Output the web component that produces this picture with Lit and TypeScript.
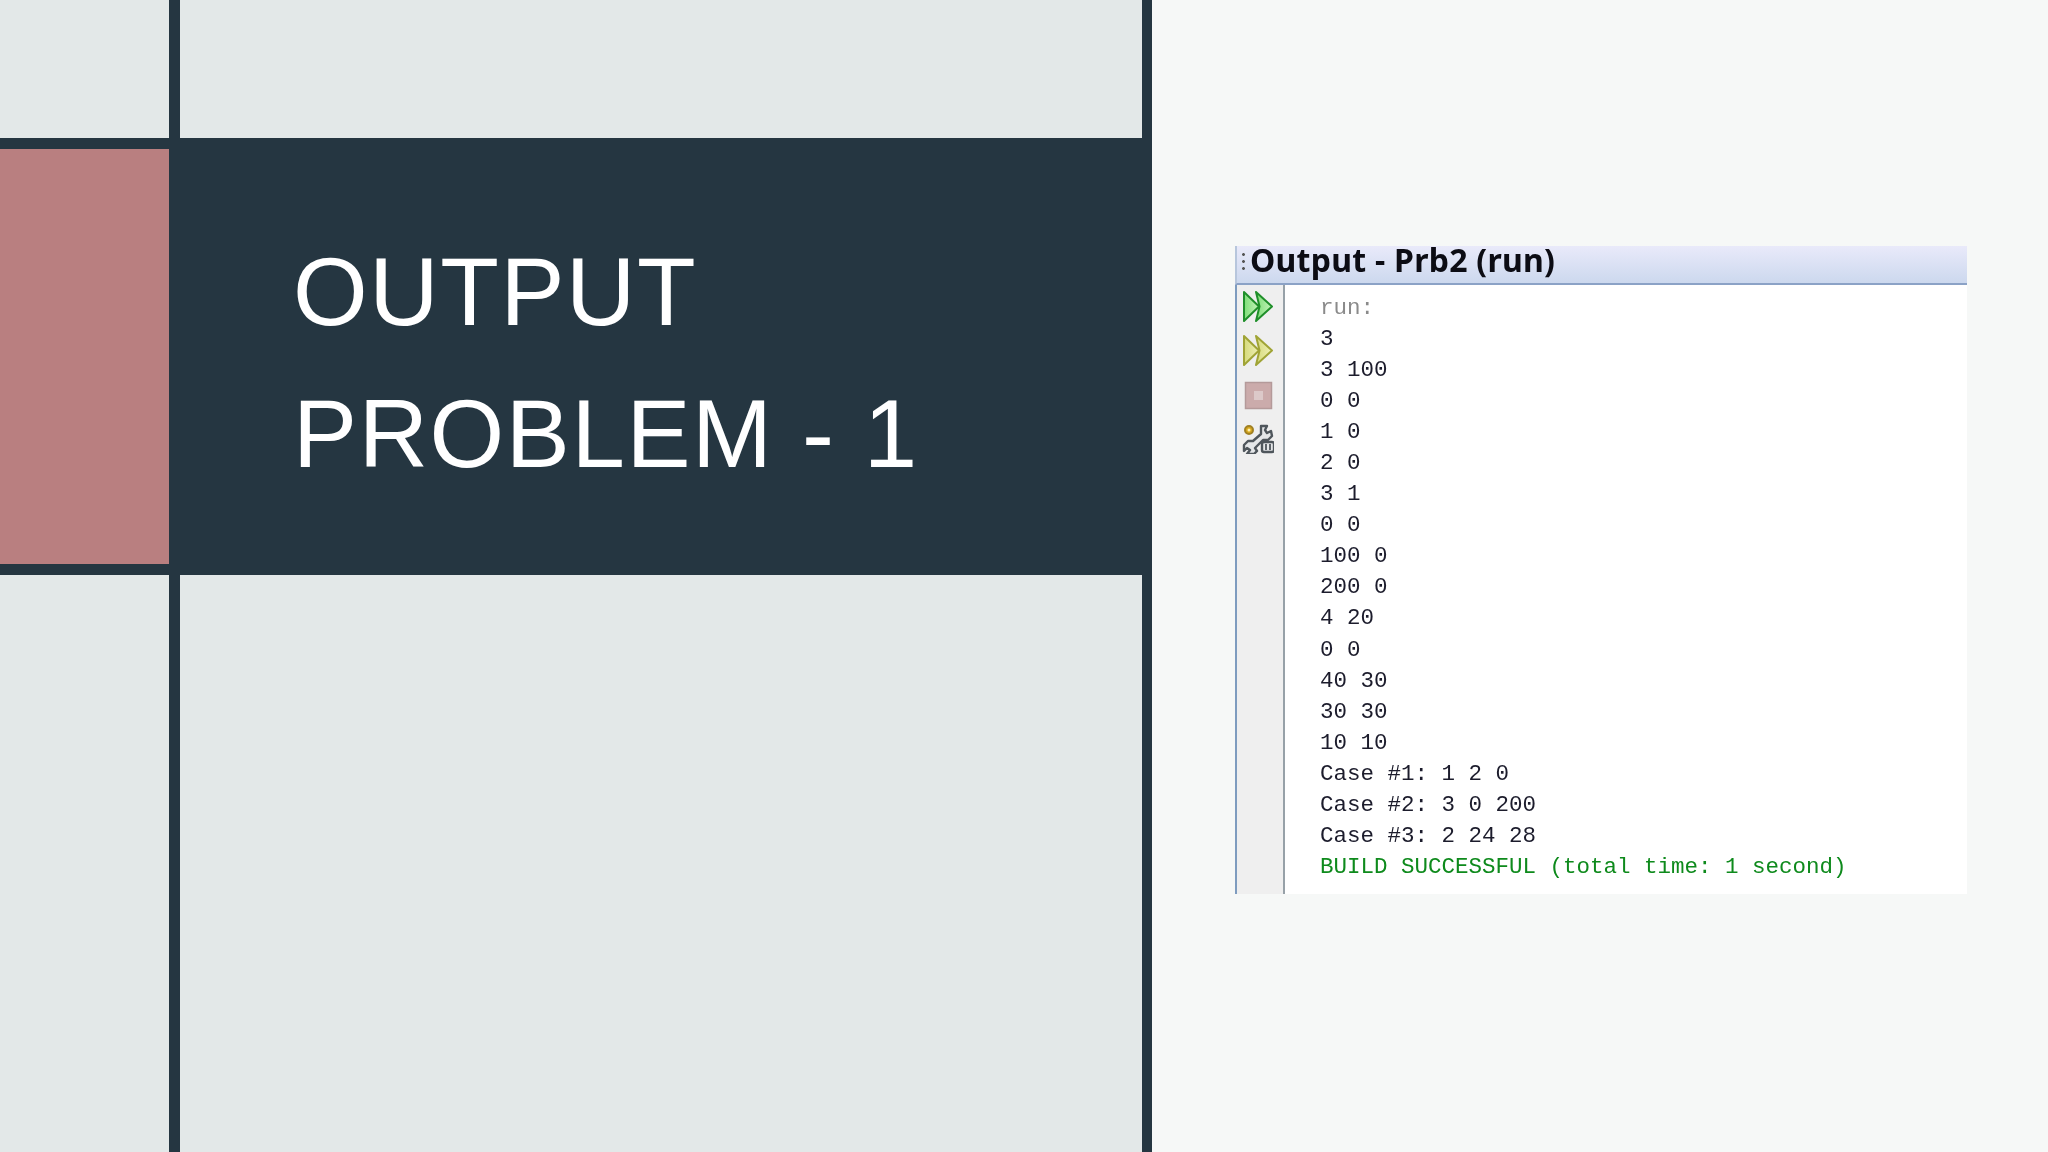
import { LitElement, html, css } from 'lit';
import { customElement } from 'lit/decorators.js';

const LINES = [
  '3',
  '3 100',
  '0 0',
  '1 0',
  '2 0',
  '3 1',
  '0 0',
  '100 0',
  '200 0',
  '4 20',
  '0 0',
  '40 30',
  '30 30',
  '10 10',
  'Case #1: 1 2 0',
  'Case #2: 3 0 200',
  'Case #3: 2 24 28',
];

const runIcon = (id: string, from: string, to: string, edge: string) => html`
  <svg class="icon" viewBox="0 0 32 32">
    <defs>
      <linearGradient id=${id} x1="0" y1="0" x2="1" y2="0">
        <stop offset="0" stop-color=${from}></stop>
        <stop offset="1" stop-color=${to}></stop>
      </linearGradient>
    </defs>
    <path d="M2 2 L17 16.500 L2 31 Z" fill="url(#${id})" stroke=${edge} stroke-width="2" stroke-linejoin="round"></path>
    <path d="M14 2 L30 16.500 L14 31 L17.500 16.500 Z" fill="url(#${id})" stroke=${edge} stroke-width="2" stroke-linejoin="round"></path>
  </svg>
`;

@customElement('app-root')
export class AppRoot extends LitElement {
  static styles = css`
    :host {
      display: grid;
      grid-template-columns: 1152px 1fr;
      height: 1152px;
      background: #f6f8f7;
      overflow: hidden;
    }

    .slide {
      display: grid;
      grid-template-columns: 169px 962px;
      grid-template-rows: 138px 415px 577px;
      gap: 11px;
      padding-right: 10px;
      background: #253641;
    }

    .cell {
      background: #e3e8e8;
    }

    .accent {
      background: #b97f80;
    }

    .heading {
      margin: 0;
      padding: 13px 0 0 113px;
      align-self: center;
      font-family: 'Liberation Sans', Arial, sans-serif;
      font-size: 96px;
      font-weight: 400;
      line-height: 142px;
      letter-spacing: 1.6px;
      color: #ffffff;
    }

    .side {
      padding: 246px 0 0 83px;
    }

    .window {
      width: 732px;
      height: 648px;
      display: flex;
      flex-direction: column;
      background: #ffffff;
    }

    .titlebar {
      height: 37px;
      flex: none;
      display: flex;
      align-items: flex-start;
      gap: 5px;
      padding-left: 5px;
      background: linear-gradient(#e9eafa, #ccd8ee);
      border-left: 2px solid #b7c6dc;
      border-bottom: 2px solid #8ba2c6;
    }

    .grip {
      width: 3px;
      height: 22px;
      margin-top: 5px;
      background: radial-gradient(circle, #555 0 1.2px, transparent 1.6px) 0 0 / 3px 7px;
    }

    .title {
      margin-top: -2px;
      font-family: 'Noto Sans', Arial, sans-serif;
      font-size: 32px;
      line-height: 32px;
      font-weight: 700;
      letter-spacing: 0.25px;
      color: #0c0c14;
      white-space: nowrap;
      filter: blur(0.4px);
    }

    .body {
      flex: 1;
      display: flex;
      min-height: 0;
    }

    .toolbar {
      width: 50px;
      flex: none;
      display: flex;
      flex-direction: column;
      gap: 12px;
      padding: 5px 0 0 5px;
      box-sizing: border-box;
      background: #efefef;
      border-left: 2px solid #7e9cbf;
      border-right: 2px solid #97a1a8;
    }

    .icon {
      display: block;
      width: 32px;
      height: 32px;
      filter: blur(0.3px);
    }

    .log {
      padding: 8px 0 0 35px;
      font-family: 'Liberation Mono', 'Courier New', monospace;
      font-size: 22.5px;
      line-height: 31.05px;
      color: #1c1c2c;
      white-space: pre;
      filter: blur(0.4px);
    }

    .muted {
      color: #8a8a8a;
    }

    .ok {
      color: #0e8a1c;
    }
  `;

  render() {
    return html`
      <div class="slide">
        <div class="cell"></div>
        <div class="cell"></div>
        <div class="accent"></div>
        <h1 class="heading">OUTPUT<br />PROBLEM - 1</h1>
        <div class="cell"></div>
        <div class="cell"></div>
      </div>
      <div class="side">
        <div class="window">
          <div class="titlebar">
            <span class="grip"></span>
            <span class="title">Output - Prb2 (run)</span>
          </div>
          <div class="body">
            <div class="toolbar">
              ${runIcon('run-a', '#7ede78', '#c4f2ba', '#1f8f2a')}
              ${runIcon('run-b', '#d6da7c', '#eef0b4', '#a0a436')}
              <svg class="icon" viewBox="0 0 32 32">
                <rect x="3.500" y="4.500" width="26" height="26" fill="#cbabab" stroke="#b49a9a" stroke-width="1.500"></rect>
                <rect x="12" y="13" width="9" height="9" fill="#dcc9c9"></rect>
              </svg>
              <svg class="icon" viewBox="0 0 32 32">
                <circle cx="7" cy="8" r="4" fill="#d9a81e" stroke="#a08024" stroke-width="2"></circle>
                <circle cx="7" cy="8" r="1.500" fill="#fff2b0"></circle>
                <path d="M19 4 h6 l-2 4 l2 3 l4 -2 l1 5 l-4 4 h-5 l-8 8 l2 3 l-3 3 h-7 l3 -4 l-3 -2 l-3 3 v-6 l4 -4 h5 l8 -7 z" fill="#e4e6e8" stroke="#4f565c" stroke-width="2.400" stroke-linejoin="round"></path>
                <rect x="20" y="20" width="12" height="10" rx="2" fill="#e4e6e8" stroke="#4f565c" stroke-width="2.400"></rect>
                <path d="M24 22 v6 M28 22 v6" stroke="#4f565c" stroke-width="1.800"></path>
              </svg>
            </div>
            <div class="log"><div class="muted">run:</div>${LINES.map((line) => html`<div>${line}</div>`)}<div class="ok">BUILD SUCCESSFUL (total time: 1 second)</div></div>
          </div>
        </div>
      </div>
    `;
  }
}
